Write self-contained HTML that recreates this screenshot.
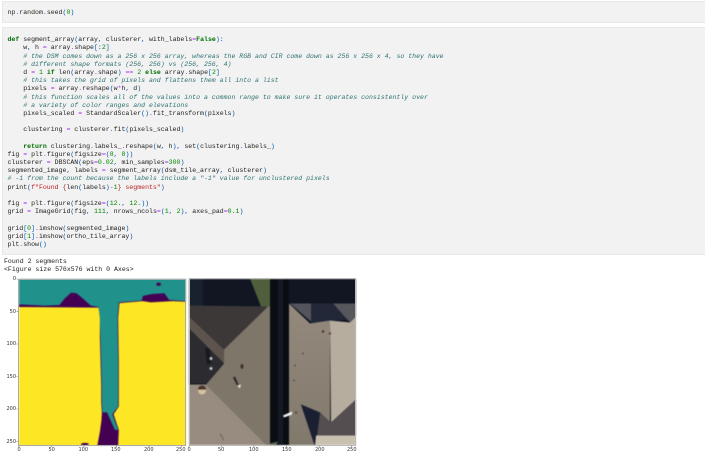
<!DOCTYPE html>
<html><head><meta charset="utf-8"><style>
html,body{margin:0;padding:0;background:#fff;width:705px;height:464px;overflow:hidden}
.cell{position:absolute;left:2px;right:0;background:#f2f2f2;border:1px solid #e8e8e8;border-right:0;box-sizing:border-box}
pre{position:absolute;margin:0;font-family:"Liberation Mono",monospace;font-size:6.55px;line-height:8.18px;color:#222;filter:blur(.32px)}
.k{color:#007000;font-weight:bold}.o{color:#a2f}.n{color:#080}.p{color:#05a}.c{color:#2f7272;font-style:italic}.s{color:#ba2121}
.t{position:absolute;font-family:"DejaVu Sans",sans-serif;font-size:5px;line-height:6px;color:#333;filter:blur(.3px)}
svg{position:absolute}
</style></head><body>
<div class="cell" style="top:1px;height:22px"></div>
<div class="cell" style="top:27px;height:228px"></div>
<pre style="left:7.5px;top:9px">np<span class="o">.</span>random<span class="o">.</span>seed<span class="p">(</span><span class="n">0</span><span class="p">)</span></pre>
<pre style="left:7.5px;top:36.2px"><span class="k">def</span> segment_array<span class="p">(</span>array<span class="p">,</span> clusterer<span class="p">,</span> with_labels<span class="o">=</span><span class="k">False</span><span class="p">):</span>
    w<span class="p">,</span> h <span class="o">=</span> array<span class="o">.</span>shape<span class="p">[:</span><span class="n">2</span><span class="p">]</span>
    <span class="c"># the DSM comes down as a 256 x 256 array, whereas the RGB and CIR come down as 256 x 256 x 4, so they have</span>
    <span class="c"># different shape formats (256, 256) vs (256, 256, 4)</span>
    d <span class="o">=</span> <span class="n">1</span> <span class="k">if</span> len<span class="p">(</span>array<span class="o">.</span>shape<span class="p">)</span> <span class="o">==</span> <span class="n">2</span> <span class="k">else</span> array<span class="o">.</span>shape<span class="p">[</span><span class="n">2</span><span class="p">]</span>
    <span class="c"># this takes the grid of pixels and flattens them all into a list</span>
    pixels <span class="o">=</span> array<span class="o">.</span>reshape<span class="p">(</span>w<span class="o">*</span>h<span class="p">,</span> d<span class="p">)</span>
    <span class="c"># this function scales all of the values into a common range to make sure it operates consistently over</span>
    <span class="c"># a variety of color ranges and elevations</span>
    pixels_scaled <span class="o">=</span> StandardScaler<span class="p">()</span><span class="o">.</span>fit_transform<span class="p">(</span>pixels<span class="p">)</span>

    clustering <span class="o">=</span> clusterer<span class="o">.</span>fit<span class="p">(</span>pixels_scaled<span class="p">)</span>

    <span class="k">return</span> clustering<span class="o">.</span>labels_<span class="o">.</span>reshape<span class="p">(</span>w<span class="p">,</span> h<span class="p">),</span> set<span class="p">(</span>clustering<span class="o">.</span>labels_<span class="p">)</span>
fig <span class="o">=</span> plt<span class="o">.</span>figure<span class="p">(</span>figsize<span class="o">=</span><span class="p">(</span><span class="n">8</span><span class="p">,</span> <span class="n">8</span><span class="p">))</span>
clusterer <span class="o">=</span> DBSCAN<span class="p">(</span>eps<span class="o">=</span><span class="n">0.02</span><span class="p">,</span> min_samples<span class="o">=</span><span class="n">300</span><span class="p">)</span>
segmented_image<span class="p">,</span> labels <span class="o">=</span> segment_array<span class="p">(</span>dsm_tile_array<span class="p">,</span> clusterer<span class="p">)</span>
<span class="c"># -1 from the count because the labels include a "-1" value for unclustered pixels</span>
print<span class="p">(</span><span class="s">f"Found {</span>len<span class="p">(</span>labels<span class="p">)</span><span class="o">-</span><span class="n">1</span><span class="s">} segments"</span><span class="p">)</span>

fig <span class="o">=</span> plt<span class="o">.</span>figure<span class="p">(</span>figsize<span class="o">=</span><span class="p">(</span><span class="n">12.</span><span class="p">,</span> <span class="n">12.</span><span class="p">))</span>
grid <span class="o">=</span> ImageGrid<span class="p">(</span>fig<span class="p">,</span> <span class="n">111</span><span class="p">,</span> nrows_ncols<span class="o">=</span><span class="p">(</span><span class="n">1</span><span class="p">,</span> <span class="n">2</span><span class="p">),</span> axes_pad<span class="o">=</span><span class="n">0.1</span><span class="p">)</span>

grid<span class="p">[</span><span class="n">0</span><span class="p">]</span><span class="o">.</span>imshow<span class="p">(</span>segmented_image<span class="p">)</span>
grid<span class="p">[</span><span class="n">1</span><span class="p">]</span><span class="o">.</span>imshow<span class="p">(</span>ortho_tile_array<span class="p">)</span>
plt<span class="o">.</span>show<span class="p">()</span></pre>
<pre style="left:4px;top:258px">Found 2 segments
&lt;Figure size 576x576 with 0 Axes&gt;</pre>

<svg style="left:18.5px;top:279px;filter:blur(.45px)" width="167" height="166.5" viewBox="0 0 256 256" preserveAspectRatio="none">
<rect width="256" height="256" fill="#21918c"/>
<path d="M0 39 L40 41 L62 40 L70 30 L80 21 L88 22 L98 30 L110 41 L122 43 L124 60 L125 90 L126 130 L127 165 L127 190 L128 205 L127 230 L123 256 L0 256Z" fill="#440154"/>
<path d="M0 43 L122 44 L124 60 L124 90 L125 130 L126 165 L126 190 L127 205 L126 230 L122 256 L0 256Z" fill="#fde725"/>
<path d="M153 36 L188 33 L190 26 L204 23 L223 22 L230 32 L256 34 L256 256 L151 256 L152 232 L143 208 L152 196 L152 130 L151 60Z" fill="#440154"/>
<path d="M154 37 L190 34 L202 36 L235 34 L256 35 L256 256 L152 256 L153 232 L145 208 L153 196 L153 130 L152 60Z" fill="#fde725"/>
<path d="M128 205 L135 205 L147 232 L152 232 L151 256 L120 256 L124 235Z" fill="#440154"/>
<ellipse cx="214" cy="8" rx="3.5" ry="2.5" fill="#440154"/>
<ellipse cx="101" cy="254" rx="6" ry="2" fill="#440154"/>
</svg>

<svg style="left:189px;top:278.5px;filter:blur(.55px)" width="167" height="166.5" viewBox="189 278.5 167 166.5" preserveAspectRatio="none">
<defs>
<linearGradient id="a" x1="0" y1="0" x2="0" y2="1"><stop offset="0" stop-color="#94897d"/><stop offset="1" stop-color="#82796d"/></linearGradient>
</defs>
<rect x="189" y="278" width="167" height="168" fill="#111622"/>
<rect x="189" y="278" width="14" height="28" fill="#18212e"/>
<path d="M250 278H270V306H261Z" fill="#4f5f3b"/>
<path d="M189 305L268 306L224 349L189 316Z" fill="#3b3837"/>
<path d="M268 306H270V446H268L206 384L224 363V349Z" fill="#7f766a"/>
<path d="M189 316L224 349V363L189 328Z" fill="#5d544e"/>
<path d="M189 328L224 363L207 383H189Z" fill="#2b2b30"/>
<path d="M189 384H206L268 446H189Z" fill="#978c7f"/>
<rect x="270" y="278" width="19" height="168" fill="#0a0e13"/>
<rect x="278" y="278" width="5" height="168" fill="#141a24"/>
<path d="M290 303H311V321Z" fill="#54555c"/>
<path d="M311 303H332L350 319L330 320L311 323Z" fill="#232839"/>
<path d="M333 303H356V316L350 322Z" fill="#56565d"/>
<path d="M289 303L310 323L330 320V422L320 412L301 404L315 446H289Z" fill="url(#a)"/>
<path d="M330 320L350 322L356 316V399L331 422Z" fill="#b7ad9f"/>
<path d="M320 412L331 422L356 399V435H317Z" fill="#544e50"/>
<path d="M301 404L320 412L317 435L315 446Z" fill="#1a2032"/>
<path d="M316 435H356V446H315Z" fill="#c9c0b0"/>
<path d="M205 347L210 349L211 363L207 364Z" fill="#1a1a1e"/>
<circle cx="211" cy="358" r="1.5" fill="#c5c5cc"/>
<circle cx="211" cy="368" r="1.5" fill="#c5c5cc"/>
<circle cx="202" cy="390" r="4" fill="#d6bfa2"/>
<path d="M198 389A4 4 0 0 1 206 389Z" fill="#4a3528"/>
<path d="M233 377L235 376L239 385L237 385Z" fill="#2b2724"/>
<path d="M237 385L241 384L240 388Z" fill="#e6dccc"/>
<ellipse cx="242" cy="366" rx="1.5" ry="2.5" fill="#3d3228"/>
<path d="M283 415L292 411L292 414L284 417Z" fill="#f4f4f4"/>
<path d="M220 433L224 440" stroke="#6a6055" stroke-width="1"/>
<path d="M270 443L278 441L276 445H270Z" fill="#5d6c52"/>
<circle cx="323" cy="331" r="1.2" fill="#41342a"/>
<circle cx="330" cy="333" r="1.2" fill="#5a4a3a"/>
<circle cx="303" cy="353" r="1" fill="#5f5448"/>
<circle cx="295" cy="365" r="1" fill="#5f5448"/>
<circle cx="294" cy="380" r="1" fill="#5f5448"/>
<circle cx="296" cy="412" r="1.4" fill="#5f5448"/>
</svg>
<div style="position:absolute;left:18px;top:278.5px;width:168px;height:167px;border:1px solid #aaa;box-sizing:border-box"></div>
<div style="position:absolute;left:188.5px;top:278px;width:167.5px;height:167.5px;border:1px solid #bbb;box-sizing:border-box"></div>
<svg style="left:0;top:0" width="705" height="464" stroke="#777" stroke-width=".6">
<path d="M16.5 279H18M16.5 311.6H18M16.5 344H18M16.5 376.5H18M16.5 409H18M16.5 441.6H18"/>
<path d="M19 445.5V447M51.7 445.5V447M84 445.5V447M116.7 445.5V447M149 445.5V447M181.7 445.5V447"/>
<path d="M189 445.5V447M221.7 445.5V447M254 445.5V447M286.7 445.5V447M319 445.5V447M351.7 445.5V447"/>
</svg>

<div class="t" style="right:689px;top:276px">0</div>
<div class="t" style="right:689px;top:308.5px">50</div>
<div class="t" style="right:689px;top:341px">100</div>
<div class="t" style="right:689px;top:373.5px">150</div>
<div class="t" style="right:689px;top:406px">200</div>
<div class="t" style="right:689px;top:438.5px">250</div>
<div class="t" style="left:17.5px;top:447px">0</div>
<div class="t" style="left:48.5px;top:447px">50</div>
<div class="t" style="left:78.5px;top:447px">100</div>
<div class="t" style="left:111px;top:447px">150</div>
<div class="t" style="left:144px;top:447px">200</div>
<div class="t" style="left:176px;top:447px">250</div>
<div class="t" style="left:187.5px;top:447px">0</div>
<div class="t" style="left:218px;top:447px">50</div>
<div class="t" style="left:249px;top:447px">100</div>
<div class="t" style="left:282px;top:447px">150</div>
<div class="t" style="left:315px;top:447px">200</div>
<div class="t" style="left:347px;top:447px">250</div>
</body></html>
